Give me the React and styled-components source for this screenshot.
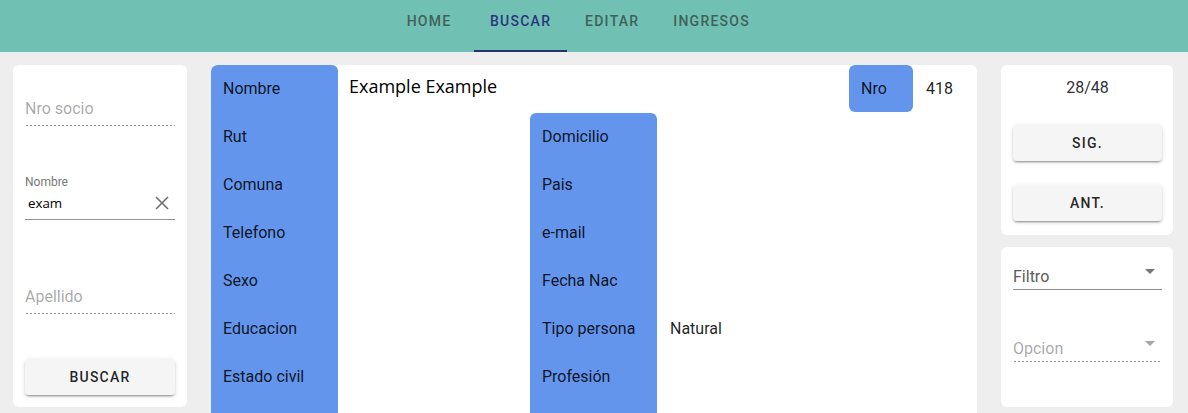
import styled, { css, createGlobalStyle } from "styled-components";

const GlobalStyle = createGlobalStyle`
  body {
    margin: 0;
    background: #eeeeee;
    font-family: Roboto, "Liberation Sans", sans-serif;
    color: rgba(0, 0, 0, 0.87);
  }
`;

const tabs = ["Home", "Buscar", "Editar", "Ingresos"];

const leftRows = [
  ["Rut", "", "Domicilio", ""],
  ["Comuna", "", "Pais", ""],
  ["Telefono", "", "e-mail", ""],
  ["Sexo", "", "Fecha Nac", ""],
  ["Educacion", "", "Tipo persona", "Natural"],
  ["Estado civil", "", "Profesión", ""],
  ["", "", "", ""],
];

export default function App() {
  return (
    <>
      <GlobalStyle />
      <Nav>
        {tabs.map((t) => (
          <Tab key={t} active={t === "Buscar"}>
            {t}
          </Tab>
        ))}
      </Nav>
      <Page>
        <Card>
          <Search>
            <Field>
              <InputRow dotted>
                <Placeholder>Nro socio</Placeholder>
              </InputRow>
            </Field>
            <Field>
              <SmallLabel>Nombre</SmallLabel>
              <InputRow>
                <Value>exam</Value>
                <svg width="16" height="16" viewBox="0 0 16 16">
                  <path d="M2 2 L14 14 M14 2 L2 14" stroke="#6b6b6b" strokeWidth="1.5" fill="none" />
                </svg>
              </InputRow>
            </Field>
            <Field>
              <InputRow dotted>
                <Placeholder>Apellido</Placeholder>
              </InputRow>
            </Field>
            <Button>Buscar</Button>
          </Search>
        </Card>

        <Card>
          <TopRow>
            <Label first>Nombre</Label>
            <Name>Example Example</Name>
            <NroBox>Nro</NroBox>
            <NroValue>418</NroValue>
          </TopRow>
          <Grid>
            {leftRows.map((r, i) => (
              <Row key={i}>
                <Label>{r[0]}</Label>
                <Cell>{r[1]}</Cell>
                <Label first={i === 0}>{r[2]}</Label>
                <Cell>{r[3]}</Cell>
              </Row>
            ))}
          </Grid>
        </Card>

        <Side>
          <Card>
            <Pager>
              <Count>28/48</Count>
              <Button>Sig.</Button>
              <Button>Ant.</Button>
            </Pager>
          </Card>
          <Card>
            <Filters>
              <SelectRow>
                <SelectText>Filtro</SelectText>
                <Arrow />
              </SelectRow>
              <SelectRow disabled>
                <SelectText disabled>Opcion</SelectText>
                <Arrow disabled />
              </SelectRow>
            </Filters>
          </Card>
        </Side>
      </Page>
    </>
  );
}

// dashed underline like the disabled inputs (2px dash, 2px gap)
const dashedLine = css`
  border-bottom: 1px solid transparent;
  background-image: linear-gradient(to right, rgba(0, 0, 0, 0.42) 50%, transparent 0%);
  background-size: 4px 1px;
  background-repeat: repeat-x;
  background-origin: border-box;
  background-position: 1px 100%;
`;

const Nav = styled.nav`
  height: 52px;
  background: #70c1b3;
  display: flex;
  justify-content: center;
  padding-right: 38px;
`;

const Tab = styled.div`
  min-width: 90px;
  box-sizing: border-box;
  padding: 13px 16px 0;
  text-align: center;
  font-size: 14px;
  font-weight: 500;
  line-height: 16px;
  letter-spacing: 1.25px;
  text-transform: uppercase;
  color: ${(p) => (p.active ? "#2b367c" : "#3f6259")};
  border-bottom: 2px solid ${(p) => (p.active ? "#27306f" : "transparent")};
`;

const Page = styled.main`
  display: grid;
  grid-template-columns: 174px 1fr 172px;
  gap: 24px;
  align-items: start;
  padding: 13px 15px 0 13px;
`;

const Card = styled.section`
  background: #fff;
  border-radius: 6px;
  overflow: hidden;
`;

const Search = styled.div`
  display: flex;
  flex-direction: column;
  gap: 45px;
  padding: 12px;
`;

const Field = styled.div`
  height: 49px;
  display: flex;
  flex-direction: column;
`;

const SmallLabel = styled.div`
  margin-top: 4px;
  font-size: 12px;
  line-height: 14px;
  color: #777;
`;

const InputRow = styled.div`
  flex: 1;
  display: flex;
  align-items: flex-end;
  justify-content: space-between;
  padding-bottom: 7px;
  border-bottom: 1px solid rgba(0, 0, 0, 0.42);
  ${(p) => p.dotted && dashedLine}
  svg {
    margin: 0 5px 1px 0;
  }
`;

const Placeholder = styled.span`
  font-size: 16px;
  line-height: 19px;
  color: rgba(0, 0, 0, 0.36);
`;

const Value = styled.span`
  padding-left: 3px;
  font-family: "Open Sans", "Liberation Sans", sans-serif;
  font-size: 13.33px;
  line-height: 17px;
  color: #000;
`;

const Button = styled.button`
  height: 36px;
  border: none;
  border-radius: 4px;
  background: #f5f5f5;
  box-shadow: 0 3px 1px -2px rgba(0, 0, 0, 0.2), 0 2px 2px 0 rgba(0, 0, 0, 0.14),
    0 1px 5px 0 rgba(0, 0, 0, 0.12);
  font-family: Roboto, "Liberation Sans", sans-serif;
  font-size: 14px;
  font-weight: 500;
  letter-spacing: 1.25px;
  text-transform: uppercase;
  color: rgba(0, 0, 0, 0.87);
`;

const TopRow = styled.div`
  display: flex;
  height: 48px;
`;

const Label = styled.div`
  width: 127px;
  box-sizing: border-box;
  padding: 0 12px 1px;
  display: flex;
  align-items: center;
  background: #6495ed;
  font-size: 16px;
  color: rgba(0, 0, 0, 0.87);
  border-radius: ${(p) => (p.first ? "6px 6px 0 0" : "0")};
`;

const Name = styled.div`
  flex: 1;
  padding: 9px 11px 0;
  font-family: "Open Sans", "Liberation Sans", sans-serif;
  font-size: 18px;
  line-height: 24px;
  color: #000;
`;

const NroBox = styled.div`
  width: 64px;
  height: 47px;
  box-sizing: border-box;
  padding: 0 12px 1px;
  display: flex;
  align-items: center;
  background: #6495ed;
  border-radius: 6px;
  font-size: 16px;
`;

const NroValue = styled.div`
  width: 64px;
  box-sizing: border-box;
  padding: 0 13px 1px;
  display: flex;
  align-items: center;
  font-size: 16px;
`;

const Grid = styled.div`
  display: flex;
  flex-direction: column;
`;

const Row = styled.div`
  display: grid;
  grid-template-columns: 127px 192px 127px 1fr;
  height: 48px;
`;

const Cell = styled.div`
  padding: 0 13px 1px;
  display: flex;
  align-items: center;
  font-size: 16px;
`;

const Side = styled.div`
  display: flex;
  flex-direction: column;
  gap: 12px;
`;

const Pager = styled.div`
  display: flex;
  flex-direction: column;
  padding: 12px 11px 14px 12px;
  ${Button} + ${Button} {
    margin-top: 24px;
  }
`;

const Count = styled.div`
  margin-bottom: 26px;
  text-align: center;
  font-size: 16px;
  line-height: 22px;
  color: #333;
`;

const Filters = styled.div`
  display: flex;
  flex-direction: column;
  gap: 41px;
  padding: 12px 11px 45px 12px;
`;

const SelectRow = styled.div`
  height: 31px;
  box-sizing: border-box;
  display: flex;
  align-items: flex-end;
  justify-content: space-between;
  padding-bottom: 3px;
  border-bottom: 1px solid #8c8c8c;
  ${(p) => p.disabled && dashedLine}
`;

const SelectText = styled.span`
  font-size: 16px;
  line-height: 19px;
  color: ${(p) => (p.disabled ? "rgba(0, 0, 0, 0.36)" : "#5a5a5a")};
`;

const Arrow = styled.span`
  width: 0;
  height: 0;
  margin: 0 7px 12px 0;
  border-left: 5px solid transparent;
  border-right: 5px solid transparent;
  border-top: 5px solid ${(p) => (p.disabled ? "#a6a6a6" : "#757575")};
`;
